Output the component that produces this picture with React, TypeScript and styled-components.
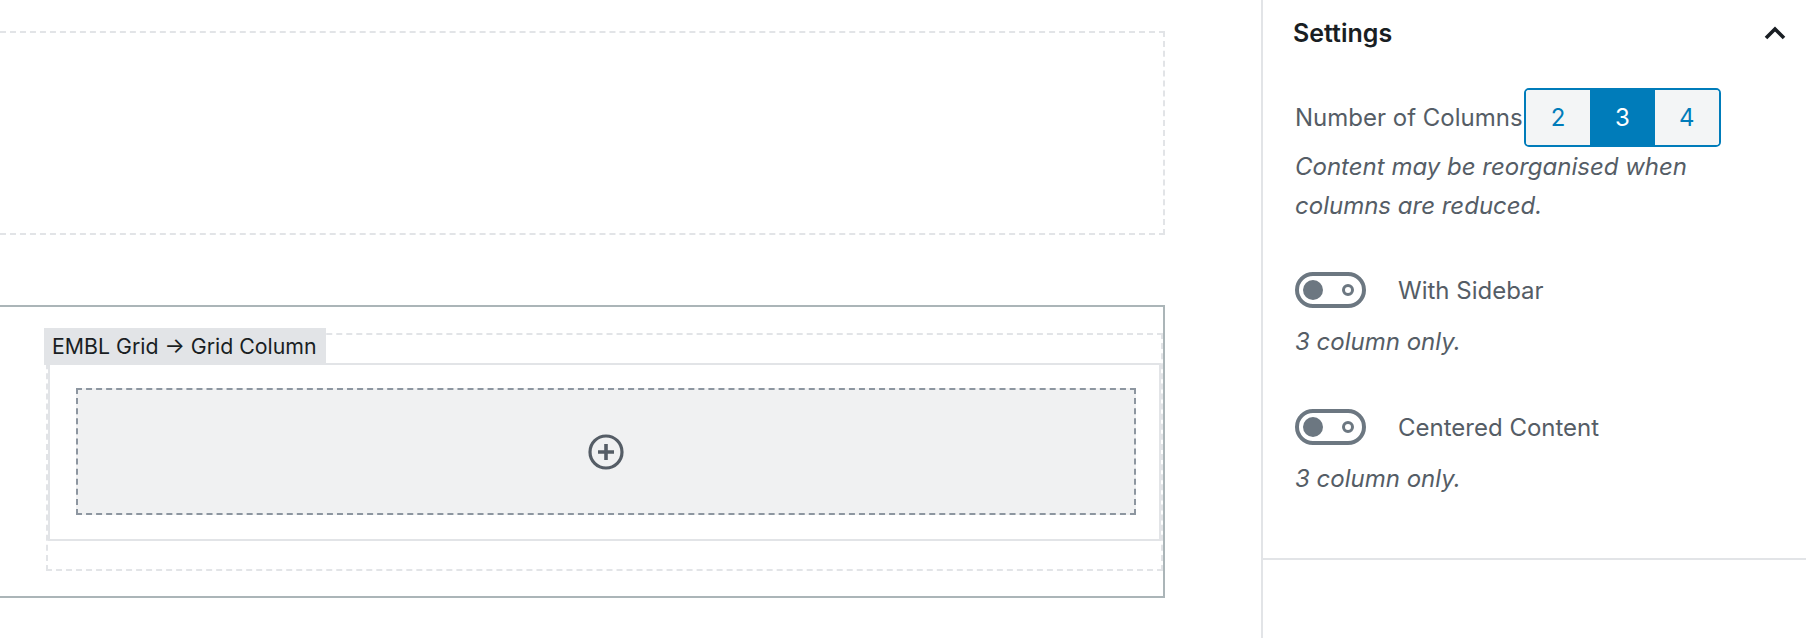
import styled, { createGlobalStyle } from "styled-components";

const GlobalStyle = createGlobalStyle`
  html, body {
    margin: 0;
    padding: 0;
    background: #fff;
  }
  body {
    font-family: Inter, "Noto Sans", "Liberation Sans", sans-serif;
    overflow: hidden;
  }
  * {
    box-sizing: border-box;
  }
`;

const Layout = styled.div`
  display: flex;
  width: 1806px;
  height: 638px;
`;

const Canvas = styled.main`
  flex: 1;
  overflow: hidden;
  padding-top: 31px;
`;

const Blocks = styled.div`
  width: 1185px;
  margin-left: -20px;
  display: flex;
  flex-direction: column;
  gap: 70px;
`;

const EmptyBlock = styled.div`
  height: 204px;
  border: 2px dashed #e2e4e7;
`;

const GridBlock = styled.div`
  height: 293px;
  border: 2px solid #abb5b8;
  padding: 26px 0 25px 64px;
`;

const ColumnsArea = styled.div`
  height: 100%;
  border: 2px dashed #e2e4e7;
  padding: 28px 0;
`;

const Column = styled.div`
  position: relative;
  height: 100%;
  border: 2px solid #e2e4e7;
  padding: 23px 23px 24px 26px;
`;

const Breadcrumb = styled.div`
  position: absolute;
  top: -37px;
  left: -6px;
  height: 37px;
  padding: 0 9px 0 8px;
  background: #e2e4e7;
  color: #191e23;
  font-size: 21.3px;
  line-height: 37px;
  white-space: nowrap;
`;

const Appender = styled.div`
  height: 100%;
  border: 2px dashed #8d96a0;
  background: #f0f1f2;
  display: flex;
  align-items: center;
  justify-content: center;
`;

const Sidebar = styled.aside`
  width: 545px;
  border-left: 2px solid #e2e4e7;
  display: flex;
  flex-direction: column;
`;

const PanelHeader = styled.div`
  height: 66px;
  display: flex;
  align-items: center;
  justify-content: space-between;
  padding: 0 20px 0 30px;
  font-size: 25px;
  font-weight: 600;
  color: #191e23;
`;

const PanelBody = styled.div`
  padding: 22px 31px 60px 32px;
  border-bottom: 2px solid #e2e4e7;
`;

const ColumnsRow = styled.div`
  display: flex;
  align-items: center;
  height: 59px;
`;

const Label = styled.span`
  font-size: 24px;
  color: #555d66;
  white-space: nowrap;
`;

const ColumnsLabel = styled(Label)`
  width: 229px;
`;

const ButtonGroup = styled.div`
  display: flex;
  width: 197px;
  height: 59px;
  border: 2px solid #007cba;
  border-radius: 5px;
  overflow: hidden;
`;

const ColButton = styled.button<{ $active?: boolean }>`
  flex: 1;
  border: none;
  margin: 0;
  padding: 0;
  font-family: inherit;
  font-size: 24px;
  background: ${(p) => (p.$active ? "#007cba" : "#f3f5f6")};
  color: ${(p) => (p.$active ? "#fff" : "#007cba")};
`;

const Help = styled.p<{ $top?: number }>`
  margin: ${(p) => p.$top ?? 0}px 0 0;
  font-size: 24px;
  line-height: 39px;
  font-style: italic;
  color: #555d66;
`;

const ToggleRow = styled.div<{ $top: number }>`
  display: flex;
  align-items: center;
  height: 36px;
  margin-top: ${(p) => p.$top}px;
`;

const Track = styled.span`
  display: flex;
  align-items: center;
  justify-content: space-between;
  width: 71px;
  height: 36px;
  padding: 0 8px 0 4px;
  border: 4px solid #6c7781;
  border-radius: 18px;
`;

const Thumb = styled.span`
  width: 20px;
  height: 20px;
  border-radius: 50%;
  background: #6c7781;
`;

const OffMark = styled.span`
  width: 12px;
  height: 12px;
  border-radius: 50%;
  border: 3px solid #6c7781;
`;

const ToggleLabel = styled(Label)`
  margin-left: 32px;
`;

function Toggle({ label, top }: { label: string; top: number }) {
  return (
    <>
      <ToggleRow $top={top}>
        <Track>
          <Thumb />
          <OffMark />
        </Track>
        <ToggleLabel>{label}</ToggleLabel>
      </ToggleRow>
      <Help $top={14}>3 column only.</Help>
    </>
  );
}

export default function App() {
  return (
    <>
      <GlobalStyle />
      <Layout>
        <Canvas>
          <Blocks>
            <EmptyBlock />
            <GridBlock>
              <ColumnsArea>
                <Column>
                  <Breadcrumb>EMBL Grid → Grid Column</Breadcrumb>
                  <Appender>
                    <svg width="40" height="40" viewBox="0 0 40 40">
                      <circle cx="20" cy="20" r="16" fill="none" stroke="#555d66" strokeWidth="3.2" />
                      <path d="M20 12v16M12 20h16" stroke="#555d66" strokeWidth="3.6" />
                    </svg>
                  </Appender>
                </Column>
              </ColumnsArea>
            </GridBlock>
          </Blocks>
        </Canvas>
        <Sidebar>
          <PanelHeader>
            <span>Settings</span>
            <svg width="22" height="14" viewBox="0 0 22 14">
              <polyline points="2,12 11,3 20,12" fill="none" stroke="#191e23" strokeWidth="3.6" />
            </svg>
          </PanelHeader>
          <PanelBody>
            <ColumnsRow>
              <ColumnsLabel>Number of Columns</ColumnsLabel>
              <ButtonGroup>
                <ColButton>2</ColButton>
                <ColButton $active>3</ColButton>
                <ColButton>4</ColButton>
              </ButtonGroup>
            </ColumnsRow>
            <Help>Content may be reorganised when columns are reduced.</Help>
            <Toggle label="With Sidebar" top={47} />
            <Toggle label="Centered Content" top={48} />
          </PanelBody>
        </Sidebar>
      </Layout>
    </>
  );
}
